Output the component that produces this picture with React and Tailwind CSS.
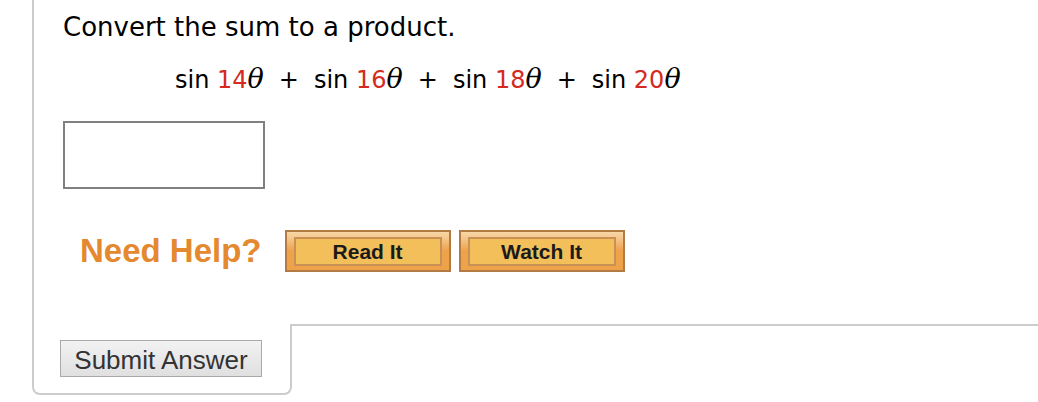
import React from 'react';

const sans = { fontFamily: '"DejaVu Sans", Verdana, sans-serif' };
const arial = { fontFamily: '"Liberation Sans", Arial, sans-serif' };

// one "sin Nθ" term with the coefficient in red
const Term = ({ n }) => (
  <span>
    sin <span className="text-[#d42a1f]">{n}</span>
    <span className="italic text-[27px] leading-none" style={{ fontFamily: '"DejaVu Serif", "Liberation Serif", serif' }}>θ</span>
  </span>
);

const Plus = () => <span className="mx-[15px]">+</span>;

const HelpButton = ({ label }) => (
  <button className="w-[166px] h-[42px] border-2 border-[#b27b44] bg-gradient-to-b from-[#f7d7a8] via-[#eea24a] to-[#eea24a] px-[7px] pt-[5px] pb-[4px]">
    <div className="h-full border-2 border-[#c99155] bg-[#f2bf5b] flex items-center justify-center text-[21px] font-bold text-[#1a1a1a]" style={arial}>
      {label}
    </div>
  </button>
);

export default function App() {
  return (
    <div className="w-[1038px] h-[402px] bg-white overflow-hidden">
      <div className="ml-[32px] flex flex-col">
        {/* question body */}
        <div className="h-[324px] border-l-2 border-[#cccccc] pl-[29px] pt-[10px]">
          <p className="text-[26px] leading-[34px] text-black" style={sans}>
            Convert the sum to a product.
          </p>
          <p className="mt-[20px] ml-[112px] h-[32px] text-[24px] leading-[32px] text-black whitespace-pre" style={sans}>
            <Term n="14" /><Plus /><Term n="16" /><Plus /><Term n="18" /><Plus /><Term n="20" />
          </p>
          <div className="mt-[25px] w-[202px] h-[68px] border-2 border-[#808080] bg-white" />
          <div className="mt-[41px] h-[42px] flex items-center">
            <span className="ml-[17px] mr-[23px] text-[33px] leading-[42px] font-bold text-[#e4892f]" style={arial}>
              Need Help?
            </span>
            <div className="flex gap-[8px]">
              <HelpButton label="Read It" />
              <HelpButton label="Watch It" />
            </div>
          </div>
        </div>

        {/* submit tab */}
        <div className="flex">
          <div className="w-[260px] h-[71px] border-x-2 border-b-2 border-[#cccccc] rounded-b-[8px] pl-[26px] pt-[16px]">
            <button className="w-[202px] h-[37px] border border-[#aaaaaa] bg-gradient-to-b from-[#f2f2f2] to-[#e0e0e0] text-[26px] text-[#333333]" style={arial}>
              Submit Answer
            </button>
          </div>
          <div className="flex-1 -ml-[2px] border-t-2 border-[#cccccc]" />
        </div>
      </div>
    </div>
  );
}
